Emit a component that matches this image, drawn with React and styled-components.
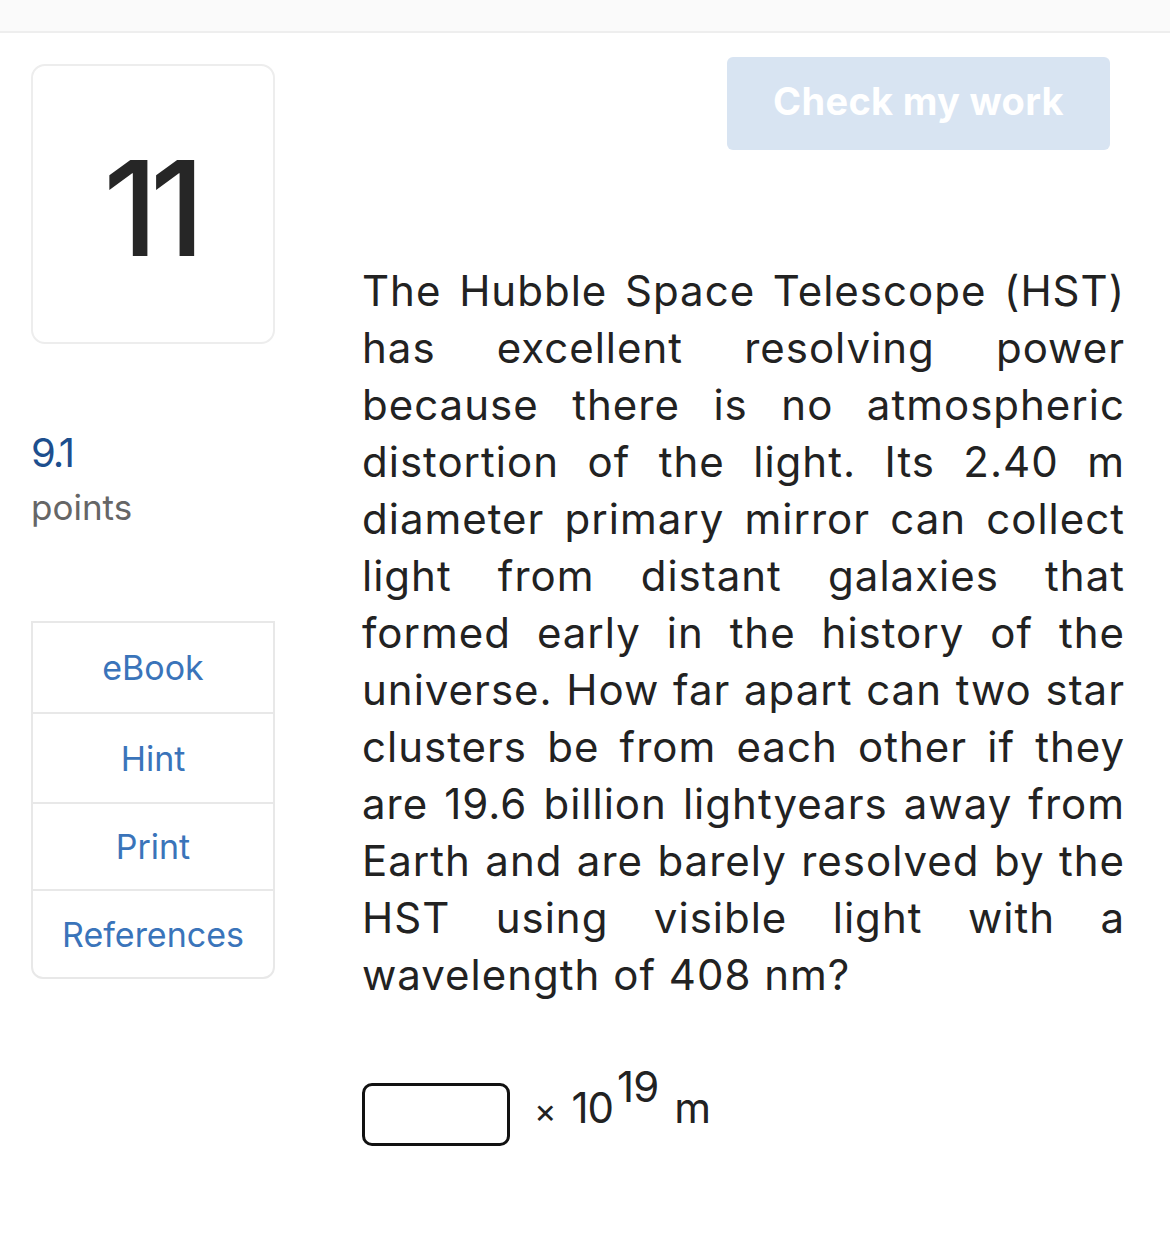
import { createGlobalStyle } from 'styled-components'
import styled from 'styled-components'

const GlobalStyle = createGlobalStyle`
  body {
    margin: 0;
    background: #ffffff;
    font-family: Inter, Lato, sans-serif;
  }
`

const TopBar = styled.div`
  height: 31px;
  background: #fafafa;
  border-bottom: 2px solid #eeeeee;
`

const Layout = styled.div`
  display: grid;
  grid-template-columns: 244px 1fr;
  column-gap: 87px;
  padding: 0 45px 80px 31px;
`

const Side = styled.div`
  display: flex;
  flex-direction: column;
`

const NumberBox = styled.div`
  margin-top: 31px;
  height: 280px;
  box-sizing: border-box;
  border: 2px solid #ededed;
  border-radius: 14px;
  display: flex;
  align-items: center;
  justify-content: center;
  font-size: 132px;
  font-weight: 500;
  color: #262626;
  letter-spacing: -8px;
  padding: 8px 6px 0 0;
`

const Points = styled.div`
  font-size: ${p => p.$big ? '40px' : '35px'};
  line-height: 54px;
  color: ${p => p.$big ? '#1d4f8e' : '#666666'};
  letter-spacing: ${p => p.$big ? '-2px' : '0'};
  margin: ${p => p.$big ? '82px 0 0' : '0'};
`

const Links = styled.div`
  margin-top: 87px;
  border: 2px solid #e8e8e8;
  border-radius: 0 0 12px 12px;
  display: flex;
  flex-direction: column;
`

const LinkRow = styled.div`
  height: ${p => p.$h}px;
  display: flex;
  align-items: center;
  justify-content: center;
  font-size: 34px;
  color: #3a74ba;
  border-top: ${p => p.$first ? 'none' : '2px solid #e8e8e8'};
`

const Main = styled.div`
  display: flex;
  flex-direction: column;
`

const ButtonRow = styled.div`
  display: flex;
  justify-content: flex-end;
  padding-right: 15px;
  margin-top: 24px;
`

const CheckButton = styled.button`
  width: 383px;
  height: 93px;
  padding: 0 0 6px;
  border: none;
  border-radius: 6px;
  background: #d8e4f2;
  color: #ffffff;
  font-family: Inter, Lato, sans-serif;
  font-weight: 700;
  font-size: 38px;
  letter-spacing: 0.3px;
`

const Question = styled.div`
  margin-top: 112px;
  font-size: 42px;
  line-height: 57px;
  letter-spacing: 1px;
  color: #222222;
`

const Line = styled.div`
  text-align: ${p => p.$last ? 'left' : 'justify'};
  text-align-last: ${p => p.$last ? 'left' : 'justify'};
  white-space: nowrap;
`

const AnswerRow = styled.div`
  margin-top: 80px;
  display: flex;
  align-items: center;
  gap: 24px;
`

const AnswerInput = styled.input`
  width: 148px;
  height: 63px;
  box-sizing: border-box;
  border: 3px solid #111111;
  border-radius: 10px;
  outline: none;
`

const Unit = styled.span`
  font-size: 42px;
  color: #222222;
  margin-top: -14px;
  letter-spacing: -1px;

  & > small {
    font-size: 34px;
    margin-right: 16px;
  }

  & > sup {
    font-size: 42px;
    vertical-align: 0.5em;
    line-height: 0;
    margin: 0 16px 0 4px;
  }
`

const lines = [
  'The Hubble Space Telescope (HST)',
  'has excellent resolving power',
  'because there is no atmospheric',
  'distortion of the light. Its 2.40 m',
  'diameter primary mirror can collect',
  'light from distant galaxies that',
  'formed early in the history of the',
  'universe. How far apart can two star',
  'clusters be from each other if they',
  'are 19.6 billion lightyears away from',
  'Earth and are barely resolved by the',
  'HST using visible light with a',
  'wavelength of 408 nm?',
]

const links = [
  { label: 'eBook', h: 89 },
  { label: 'Hint', h: 88 },
  { label: 'Print', h: 85 },
  { label: 'References', h: 86 },
]

export default function App() {
  return (
    <>
      <GlobalStyle />
      <TopBar />
      <Layout>
        <Side>
          <NumberBox>11</NumberBox>
          <Points $big>9.1</Points>
          <Points>points</Points>
          <Links>
            {links.map((l, i) => (
              <LinkRow key={l.label} $first={i === 0} $h={l.h}>{l.label}</LinkRow>
            ))}
          </Links>
        </Side>
        <Main>
          <ButtonRow>
            <CheckButton>Check my work</CheckButton>
          </ButtonRow>
          <Question>
            {lines.map((l, i) => (
              <Line key={i} $last={i === lines.length - 1}>{l}</Line>
            ))}
          </Question>
          <AnswerRow>
            <AnswerInput type="text" />
            <Unit>
              <small>×</small>10<sup>19</sup>m
            </Unit>
          </AnswerRow>
        </Main>
      </Layout>
    </>
  )
}
